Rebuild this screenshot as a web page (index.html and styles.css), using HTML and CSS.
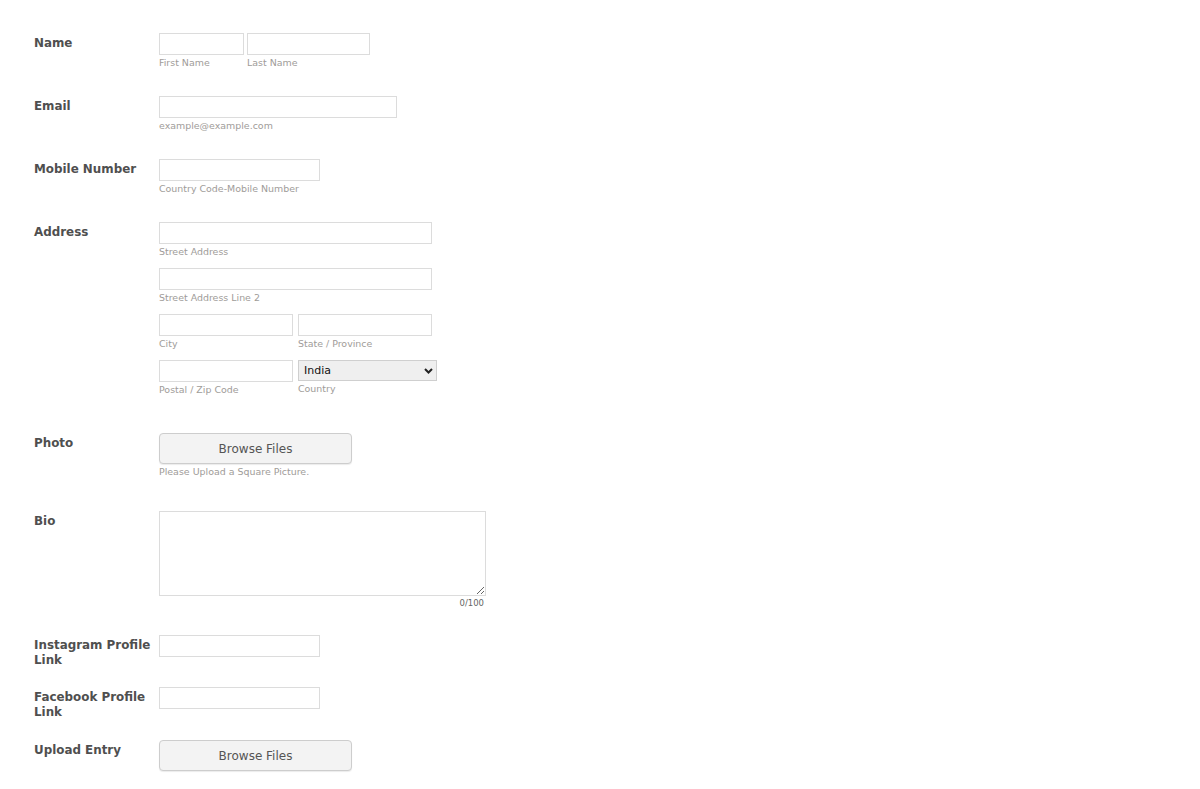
FILE: index.html
```html
<!DOCTYPE html>
<html lang="en">
<head>
<meta charset="utf-8">
<title>Form</title>
<link rel="stylesheet" href="styles.css">
</head>
<body>
<form class="form">
  <div class="row">
    <label class="label">Name</label>
    <div class="field">
      <div class="pair">
        <div class="sub-field"><input class="input w-first" type="text"><span class="sublabel">First Name</span></div>
        <div class="sub-field"><input class="input w-last" type="text"><span class="sublabel">Last Name</span></div>
      </div>
    </div>
  </div>

  <div class="row">
    <label class="label">Email</label>
    <div class="field sub-field">
      <input class="input w-email" type="email">
      <span class="sublabel">example@example.com</span>
    </div>
  </div>

  <div class="row">
    <label class="label">Mobile Number</label>
    <div class="field sub-field">
      <input class="input w-short" type="text">
      <span class="sublabel">Country Code-Mobile Number</span>
    </div>
  </div>

  <div class="row row-address">
    <label class="label">Address</label>
    <div class="field stack">
      <div class="sub-field"><input class="input w-street" type="text"><span class="sublabel">Street Address</span></div>
      <div class="sub-field"><input class="input w-street" type="text"><span class="sublabel">Street Address Line 2</span></div>
      <div class="pair pair-wide">
        <div class="sub-field"><input class="input w-half" type="text"><span class="sublabel">City</span></div>
        <div class="sub-field"><input class="input w-half" type="text"><span class="sublabel">State / Province</span></div>
      </div>
      <div class="pair pair-wide">
        <div class="sub-field"><input class="input w-half" type="text"><span class="sublabel">Postal / Zip Code</span></div>
        <div class="sub-field">
          <div class="select-wrap">
            <select class="select">
              <option>India</option>
            </select>
            <svg class="chevron" width="9" height="6" viewBox="0 0 9 6" aria-hidden="true"><path d="M1 1 L4.5 4.5 L8 1" fill="none" stroke="#222" stroke-width="2"/></svg>
          </div>
          <span class="sublabel">Country</span>
        </div>
      </div>
    </div>
  </div>

  <div class="row row-photo">
    <label class="label">Photo</label>
    <div class="field sub-field">
      <button class="btn" type="button">Browse Files</button>
      <span class="sublabel">Please Upload a Square Picture.</span>
    </div>
  </div>

  <div class="row">
    <label class="label">Bio</label>
    <div class="field sub-field w-bio">
      <textarea class="textarea"></textarea>
      <span class="counter">0/100</span>
    </div>
  </div>

  <div class="row row-compact">
    <label class="label">Instagram Profile Link</label>
    <div class="field"><input class="input w-short" type="text"></div>
  </div>

  <div class="row row-compact row-compact-last">
    <label class="label">Facebook Profile Link</label>
    <div class="field"><input class="input w-short" type="text"></div>
  </div>

  <div class="row">
    <label class="label">Upload Entry</label>
    <div class="field">
      <button class="btn" type="button">Browse Files</button>
    </div>
  </div>
</form>
</body>
</html>
```

FILE: styles.css
```css
html, body {
  margin: 0;
  background: #ffffff;
}

body {
  font-family: "DejaVu Sans", Verdana, sans-serif;
  color: #555555;
}

.form {
  padding: 33px 0 0 34px;
}

.row {
  display: grid;
  grid-template-columns: 125px 1fr;
  align-items: start;
  margin-bottom: 27px;
}

.row-address {
  margin-bottom: 37px;
}

.row-photo {
  margin-bottom: 33px;
}

.row-compact {
  margin-bottom: 19px;
}

.row-compact-last {
  margin-bottom: 20px;
}

.label {
  font-weight: bold;
  font-size: 11.9px;
  line-height: 15px;
  color: #4f4f4f;
  padding-top: 3px;
}

.field {
  min-width: 0;
}

.sub-field {
  display: flex;
  flex-direction: column;
  align-items: flex-start;
}

.pair {
  display: flex;
  gap: 3px;
}

.pair-wide {
  gap: 5px;
}

.stack {
  display: flex;
  flex-direction: column;
  gap: 10px;
}

.input {
  box-sizing: border-box;
  display: block;
  height: 22px;
  margin: 0;
  padding: 0 4px;
  border: 1px solid #dcdcdc;
  border-radius: 0;
  background: #ffffff;
  font-family: "DejaVu Sans", Verdana, sans-serif;
  font-size: 12px;
  outline: none;
}

.w-first { width: 85px; }
.w-last { width: 123px; }
.w-email { width: 238px; }
.w-short { width: 161px; }
.w-street { width: 273px; }
.w-half { width: 134px; }
.w-bio { width: 327px; }

.sublabel {
  font-size: 9.45px;
  line-height: 12px;
  margin-top: 2px;
  color: #a09c99;
  white-space: nowrap;
}

.select-wrap {
  position: relative;
  width: 139px;
  height: 21px;
}

.select {
  -webkit-appearance: none;
  appearance: none;
  box-sizing: border-box;
  display: block;
  width: 139px;
  height: 21px;
  margin: 0;
  padding: 0 0 0 5px;
  border: 1px solid #cfcfcf;
  border-radius: 0;
  background: #efefef;
  font-family: "DejaVu Sans", Verdana, sans-serif;
  font-size: 11px;
  color: #111111;
}

.chevron {
  position: absolute;
  right: 4px;
  top: 8px;
  pointer-events: none;
}

.btn {
  box-sizing: border-box;
  display: block;
  width: 193px;
  height: 31px;
  margin: 0;
  padding: 0;
  border: 1px solid #cdcdcd;
  border-radius: 4px;
  background: #f3f3f3;
  box-shadow: 0 1px 1px rgba(0, 0, 0, 0.08);
  font-family: "DejaVu Sans", Verdana, sans-serif;
  font-size: 12px;
  color: #555555;
}

.textarea {
  box-sizing: border-box;
  display: block;
  width: 327px;
  height: 85px;
  margin: 0;
  padding: 2px 4px;
  border: 1px solid #dcdcdc;
  border-radius: 0;
  background: #ffffff;
  resize: vertical;
  outline: none;
}

.counter {
  align-self: stretch;
  text-align: right;
  padding-right: 2px;
  margin-top: 2px;
  font-size: 8.5px;
  line-height: 10px;
  color: #666666;
}
```
